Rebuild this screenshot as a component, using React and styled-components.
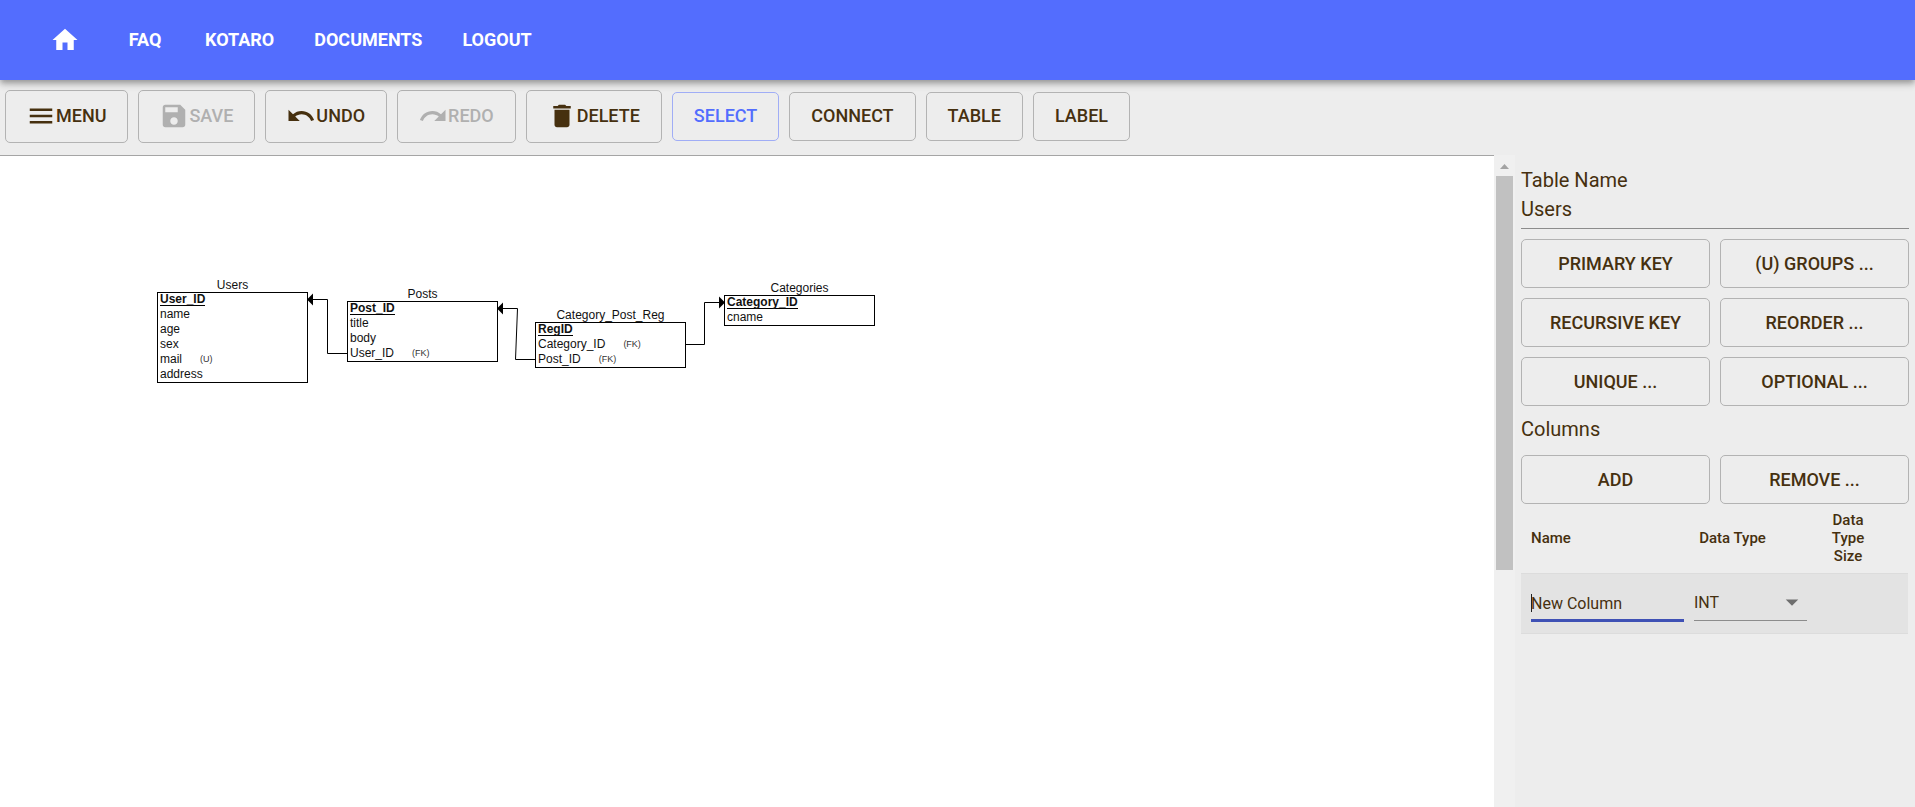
import React, { useState, useEffect, useRef } from "react";
import styled, { createGlobalStyle, css } from "styled-components";

const GlobalStyle = createGlobalStyle`
  *, *::before, *::after { box-sizing: border-box; }
  html, body { margin: 0; }
  body {
    background: #ededed;
    color: #46300f;
    font-family: Roboto, "Liberation Sans", sans-serif;
    overflow: hidden;
  }
  button, input, select { font-family: inherit; color: inherit; }
`;

const Page = styled.div`
  display: flex;
  flex-direction: column;
  height: 100vh;
`;

const Header = styled.header`
  position: relative;
  z-index: 1;
  display: flex;
  align-items: center;
  flex: none;
  height: 80px;
  padding: 0 25px;
  background: #536dfe;
  color: #fff;
  box-shadow: 0 3px 5px -1px rgba(0, 0, 0, 0.2), 0 5px 6px 0 rgba(0, 0, 0, 0.14),
    0 1px 12px 0 rgba(0, 0, 0, 0.12);
`;

const NavLink = styled.a`
  display: flex;
  justify-content: center;
  align-items: center;
  min-width: 80px;
  padding: 0 20px;
  font-size: 18px;
  font-weight: 700;
  line-height: 30px;
  text-decoration: none;
  color: inherit;
`;

const Icon = styled.svg`
  flex: none;
  width: 30px;
  height: 30px;
  fill: currentColor;
`;

const Toolbar = styled.div`
  display: flex;
  align-items: center;
  gap: 10px;
  flex: none;
  height: 75px;
  padding: 0 5px 3px;
`;

const Button = styled.button`
  display: flex;
  justify-content: center;
  align-items: center;
  min-height: ${(p) => (p.$tall ? 53 : 49)}px;
  padding: ${(p) => (p.$tall ? "0 21px 0 20px" : "0 21px")};
  border: 1px solid #b3b3b3;
  border-radius: 5px;
  background: transparent;
  font-size: 18px;
  font-weight: 500;
  line-height: 24px;
  white-space: nowrap;
  cursor: pointer;
  &:disabled {
    color: #b0b0b0;
    cursor: default;
  }
  ${(p) =>
    p.$active &&
    css`
      color: #536dfe;
      border-color: #a0adf6;
    `}
`;

const Workspace = styled.main`
  display: flex;
  flex: 1;
  min-height: 0;
`;

const Canvas = styled.section`
  position: relative;
  flex: 1;
  overflow: hidden;
  border-top: 1px solid #a5a5a5;
  background: #fff;
  color: #111;
  font-family: "Liberation Sans", Arial, sans-serif;
`;

const Edges = styled.svg`
  position: absolute;
  inset: 0;
  width: 100%;
  height: 100%;
`;

const Entity = styled.div`
  position: absolute;
  width: 151px;
  font-size: 12px;
  line-height: 15px;
`;

const EntityTitle = styled.div`
  height: 13px;
  line-height: 13px;
  text-align: center;
`;

const EntityBody = styled.ul`
  margin: 0;
  padding: 0 2px;
  list-style: none;
  border: 1px solid #000;
`;

const Field = styled.li`
  display: flex;
  height: 15px;
  line-height: 13px;
  &:last-child { height: 14px; }
`;

const KeyName = styled.b`
  height: 13px;
  border-bottom: 1px solid #000;
`;

const Tag = styled.span`
  padding-left: 18px;
  font-size: 9px;
  line-height: 13px;
  color: #333;
`;

const ScrollTrack = styled.div`
  flex: none;
  display: flex;
  flex-direction: column;
  align-items: center;
  width: 21px;
  background: #f0f0f0;
  &::after {
    content: "";
    flex: 3;
  }
`;

const ScrollArrow = styled.svg`
  flex: none;
  width: 21px;
  height: 21px;
  fill: #a3a3a3;
`;

const ScrollThumb = styled.div`
  flex: 5;
  width: 17px;
  background: #c1c1c1;
`;

const Panel = styled.aside`
  flex: none;
  width: 400px;
  padding: 10px 6px;
`;

const NameField = styled.label`
  display: block;
  font-size: 20px;
  line-height: 30px;
`;

const NameInput = styled.input`
  display: block;
  width: 100%;
  height: 34px;
  margin-bottom: 10px;
  padding: 0 0 5px;
  border: 0;
  border-bottom: 1px solid #8c8c8c;
  outline: 0;
  background: transparent;
  font-size: 20px;
`;

const ButtonGrid = styled.div`
  display: grid;
  grid-template-columns: 1fr 1fr;
  gap: 10px;
`;

const Heading = styled.h2`
  margin: 0;
  padding: 9px 0 11px;
  font-size: 20px;
  font-weight: 400;
  line-height: 29px;
`;

const ColumnTable = styled.table`
  width: 387px;
  border-collapse: collapse;
  table-layout: fixed;
  th {
    height: 69px;
    padding: 0;
    font-size: 15px;
    font-weight: 500;
    line-height: 18px;
    text-align: center;
  }
  th:first-child {
    padding-left: 10px;
    text-align: left;
  }
  td {
    height: 60px;
    padding: 0;
    vertical-align: top;
    border: solid #dcdcdc;
    border-width: 1px 0;
  }
  tbody tr { background: #e3e3e3; }
`;

const NameCell = styled.div`
  position: relative;
  margin: 11px 0 0 10px;
  ${(p) =>
    p.$caret &&
    css`
      &::before {
        content: "";
        position: absolute;
        top: 9px;
        left: 0;
        width: 1px;
        height: 18px;
        background: #222;
      }
    `}
`;

const TextInput = styled.input`
  display: block;
  width: 153px;
  height: 37px;
  padding: 3px 0 0;
  border: 0;
  border-bottom: 3px solid #3f51b5;
  outline: 0;
  background: transparent;
  font-size: 16px;
  caret-color: #222;
`;

const SelectBox = styled.div`
  display: flex;
  align-items: center;
  width: 113px;
  height: 36px;
  margin-top: 11px;
  border-bottom: 1px solid #8c8c8c;
`;

const TypeSelect = styled.select`
  flex: 1;
  min-width: 0;
  height: 34px;
  padding: 0;
  border: 0;
  outline: 0;
  appearance: none;
  background: transparent;
  font-size: 16px;
`;

const SelectArrow = styled(Icon)`
  margin-left: -30px;
  pointer-events: none;
  color: #6e6e6e;
`;

const ICONS = {
  home: "M10 20v-6h4v6h5v-8h3L12 3 2 12h3v8z",
  menu: "M3 18h18v-2H3v2zm0-5h18v-2H3v2zm0-7v2h18V6H3z",
  save: "M17 3H5c-1.11 0-2 .9-2 2v14c0 1.1.89 2 2 2h14c1.1 0 2-.9 2-2V7l-4-4zm-5 16c-1.66 0-3-1.34-3-3s1.34-3 3-3 3 1.34 3 3-1.34 3-3 3zm3-10H5V5h10v4z",
  undo: "M12.5 8c-2.65 0-5.05.99-6.9 2.6L2 7v9h9l-3.62-3.62c1.39-1.16 3.16-1.88 5.12-1.88 3.54 0 6.55 2.31 7.6 5.5l2.37-.78C21.08 11.03 17.15 8 12.5 8z",
  redo: "M18.4 10.6C16.55 8.99 14.15 8 11.5 8c-4.65 0-8.58 3.03-9.96 7.22L3.9 16c1.05-3.19 4.05-5.5 7.6-5.5 1.95 0 3.73.72 5.12 1.88L13 16h9V7l-3.6 3.6z",
  delete: "M6 19c0 1.1.9 2 2 2h8c1.1 0 2-.9 2-2V7H6v12zM19 4h-3.5l-1-1h-5l-1 1H5v2h14V4z",
};

const TOOLS = [
  { label: "MENU", icon: "menu" },
  { label: "SAVE", icon: "save", disabled: true },
  { label: "UNDO", icon: "undo" },
  { label: "REDO", icon: "redo", disabled: true },
  { label: "DELETE", icon: "delete" },
  { label: "SELECT" },
  { label: "CONNECT" },
  { label: "TABLE" },
  { label: "LABEL" },
];

const ENTITIES = [
  {
    name: "Users", x: 157, y: 123,
    fields: [{ name: "User_ID", key: true }, { name: "name" }, { name: "age" }, { name: "sex" }, { name: "mail", tag: "(U)" }, { name: "address" }],
  },
  {
    name: "Posts", x: 347, y: 132,
    fields: [{ name: "Post_ID", key: true }, { name: "title" }, { name: "body" }, { name: "User_ID", tag: "(FK)" }],
  },
  {
    name: "Category_Post_Reg", x: 535, y: 153,
    fields: [{ name: "RegID", key: true }, { name: "Category_ID", tag: "(FK)" }, { name: "Post_ID", tag: "(FK)" }],
  },
  {
    name: "Categories", x: 724, y: 126,
    fields: [{ name: "Category_ID", key: true }, { name: "cname" }],
  },
];

const EDGES = [
  { line: "M308 143.5H327.5V197.5H347", head: "M307 143.5l6-6v12z" },
  { line: "M498 152.5H517.5L515.5 203.5H535", head: "M497 152.5l6-6v12z" },
  { line: "M686 188.5H704.5L704.5 146.5H724", head: "M725 146.5l-6-6v12z" },
];

const TABLE_ACTIONS = ["PRIMARY KEY", "(U) GROUPS ...", "RECURSIVE KEY", "REORDER ...", "UNIQUE ...", "OPTIONAL ..."];

function EntityTable({ name, x, y, fields }) {
  return (
    <Entity style={{ left: x, top: y }}>
      <EntityTitle>{name}</EntityTitle>
      <EntityBody>
        {fields.map((f) => (
          <Field key={f.name}>
            {f.key ? <KeyName>{f.name}</KeyName> : f.name}
            {f.tag && <Tag>{f.tag}</Tag>}
          </Field>
        ))}
      </EntityBody>
    </Entity>
  );
}

export default function App() {
  const [mode, setMode] = useState("SELECT");
  const [untouched, setUntouched] = useState(true);
  const columnInput = useRef(null);

  useEffect(() => {
    columnInput.current.focus();
    columnInput.current.setSelectionRange(0, 0);
  }, []);

  const touch = () => setUntouched(false);

  return (
    <Page>
      <GlobalStyle />
      <Header>
        <NavLink href="#home" aria-label="Home">
          <Icon viewBox="0 0 24 24"><path d={ICONS.home} /></Icon>
        </NavLink>
        {["FAQ", "KOTARO", "DOCUMENTS", "LOGOUT"].map((t) => (
          <NavLink key={t} href={`#${t.toLowerCase()}`}>{t}</NavLink>
        ))}
      </Header>
      <Toolbar>
        {TOOLS.map(({ label, icon, disabled }) => (
          <Button
            key={label}
            type="button"
            disabled={disabled}
            $tall={Boolean(icon)}
            $active={label === mode}
            onClick={icon ? undefined : () => setMode(label)}
          >
            {icon && <Icon viewBox="0 0 24 24"><path d={ICONS[icon]} /></Icon>}
            {label}
          </Button>
        ))}
      </Toolbar>
      <Workspace>
        <Canvas aria-label="Diagram">
          <Edges>
            {EDGES.map((e) => (
              <g key={e.line}>
                <path d={e.line} fill="none" stroke="#000" />
                <path d={e.head} />
              </g>
            ))}
          </Edges>
          {ENTITIES.map((e) => <EntityTable key={e.name} {...e} />)}
        </Canvas>
        <ScrollTrack aria-hidden="true">
          <ScrollArrow viewBox="0 0 21 21"><path d="M6 14l4.5-5 4.5 5z" /></ScrollArrow>
          <ScrollThumb />
        </ScrollTrack>
        <Panel>
          <NameField htmlFor="table-name">Table Name</NameField>
          <NameInput id="table-name" defaultValue="Users" />
          <ButtonGrid>
            {TABLE_ACTIONS.map((t) => <Button key={t} type="button">{t}</Button>)}
          </ButtonGrid>
          <Heading>Columns</Heading>
          <ButtonGrid>
            <Button type="button">ADD</Button>
            <Button type="button">REMOVE ...</Button>
          </ButtonGrid>
          <ColumnTable>
            <colgroup>
              <col width="173" />
              <col width="77" />
              <col width="47" />
              <col width="60" />
              <col width="30" />
            </colgroup>
            <thead>
              <tr>
                <th scope="col">Name</th>
                <th scope="col">Data Type</th>
                <th />
                <th scope="col">Data<br />Type<br />Size</th>
                <th />
              </tr>
            </thead>
            <tbody>
              <tr>
                <td>
                  <NameCell $caret={untouched}>
                    <TextInput
                      ref={columnInput}
                      aria-label="Column name"
                      defaultValue="New Column"
                      onKeyDown={touch}
                      onMouseDown={touch}
                      onBlur={touch}
                    />
                  </NameCell>
                </td>
                <td colSpan={2}>
                  <SelectBox>
                    <TypeSelect aria-label="Data type" defaultValue="INT">
                      <option>INT</option>
                      <option>VARCHAR</option>
                    </TypeSelect>
                    <SelectArrow viewBox="0 0 24 24"><path d="M7 10l5 5 5-5z" /></SelectArrow>
                  </SelectBox>
                </td>
                <td />
                <td />
              </tr>
            </tbody>
          </ColumnTable>
        </Panel>
      </Workspace>
    </Page>
  );
}
